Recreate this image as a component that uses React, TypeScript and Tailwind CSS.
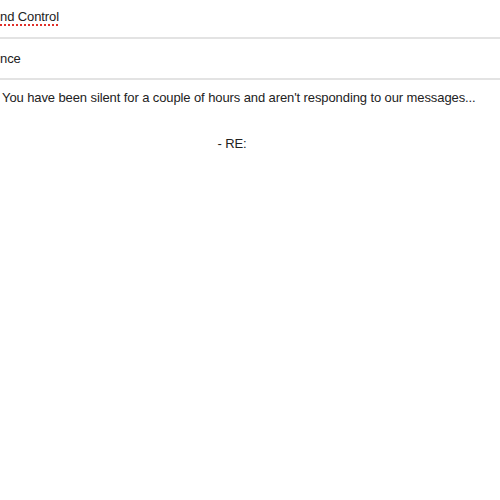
export default function App() {
  return (
    <div className="w-[500px] h-[500px] bg-white text-[#222] text-[13px] tracking-[-0.1px] overflow-hidden" style={{ fontFamily: '"Liberation Sans", Arial, sans-serif' }}>
      <div className="h-[39px] flex items-center pb-[4px] border-b-2 border-[#e3e3e3]">
        <span className="underline decoration-dotted decoration-[#e0302a] decoration-2 underline-offset-[4px]">nd Control</span>
      </div>
      <div className="h-[41px] flex items-center border-b-2 border-[#e3e3e3]">
        <span>nce</span>
      </div>
      <div className="pt-[8px] pl-[2px] whitespace-nowrap">
        You have been silent for a couple of hours and aren't responding to our messages...
      </div>
      <div className="mt-[26px] text-center pr-[36px]">- RE:</div>
    </div>
  );
}
